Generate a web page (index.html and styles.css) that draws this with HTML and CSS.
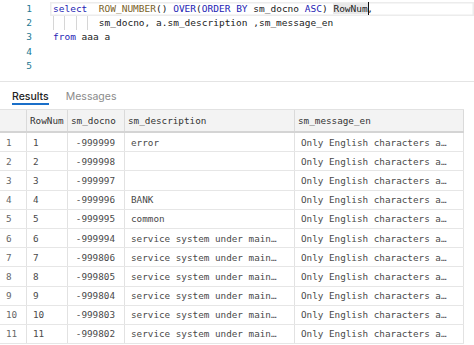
FILE: index.html
```html
<!DOCTYPE html>
<html>
<head>
<meta charset="utf-8">
<link rel="stylesheet" href="styles.css">
</head>
<body>
<div class="editor">
  <div class="gutter">
    <div class="ln">1</div>
    <div class="ln">2</div>
    <div class="ln">3</div>
    <div class="ln">4</div>
    <div class="ln">5</div>
  </div>
  <div class="code">
    <div class="line current"><span class="kw">select</span>  <span class="fn">ROW_NUMBER</span>() <span class="kw">OVER</span>(<span class="kw">ORDER</span> <span class="kw">BY</span> sm_docno <span class="kw">ASC</span>) <span class="hl">RowNum</span><span class="cursor"></span>,</div>
    <div class="line"><span class="ind">  </span><span class="ind">  </span><span class="ind">  </span><span class="ind">  </span>sm_docno, a.sm_description ,sm_message_en</div>
    <div class="line"><span class="kw">from</span> aaa a</div>
    <div class="line"> </div>
    <div class="line"> </div>
  </div>
</div>
<div class="tabs">
  <div class="tab active">Results</div>
  <div class="tab">Messages</div>
</div>
<div class="grid">
  <div class="row head">
    <div class="c c0"></div><div class="c c1">RowNum</div><div class="c c2">sm_docno</div><div class="c c3">sm_description</div><div class="c c4">sm_message_en</div>
  </div>
  <div class="row"><div class="c c0">1</div><div class="c c1">1</div><div class="c c2 num">-999999</div><div class="c c3">error</div><div class="c c4">Only English characters a…</div></div>
  <div class="row"><div class="c c0">2</div><div class="c c1">2</div><div class="c c2 num">-999998</div><div class="c c3"></div><div class="c c4">Only English characters a…</div></div>
  <div class="row"><div class="c c0">3</div><div class="c c1">3</div><div class="c c2 num">-999997</div><div class="c c3"></div><div class="c c4">Only English characters a…</div></div>
  <div class="row"><div class="c c0">4</div><div class="c c1">4</div><div class="c c2 num">-999996</div><div class="c c3">BANK</div><div class="c c4">Only English characters a…</div></div>
  <div class="row"><div class="c c0">5</div><div class="c c1">5</div><div class="c c2 num">-999995</div><div class="c c3">common</div><div class="c c4">Only English characters a…</div></div>
  <div class="row"><div class="c c0">6</div><div class="c c1">6</div><div class="c c2 num">-999994</div><div class="c c3">service system under main…</div><div class="c c4">Only English characters a…</div></div>
  <div class="row"><div class="c c0">7</div><div class="c c1">7</div><div class="c c2 num">-999806</div><div class="c c3">service system under main…</div><div class="c c4">Only English characters a…</div></div>
  <div class="row"><div class="c c0">8</div><div class="c c1">8</div><div class="c c2 num">-999805</div><div class="c c3">service system under main…</div><div class="c c4">Only English characters a…</div></div>
  <div class="row"><div class="c c0">9</div><div class="c c1">9</div><div class="c c2 num">-999804</div><div class="c c3">service system under main…</div><div class="c c4">Only English characters a…</div></div>
  <div class="row"><div class="c c0">10</div><div class="c c1">10</div><div class="c c2 num">-999803</div><div class="c c3">service system under main…</div><div class="c c4">Only English characters a…</div></div>
  <div class="row"><div class="c c0">11</div><div class="c c1">11</div><div class="c c2 num">-999802</div><div class="c c3">service system under main…</div><div class="c c4">Only English characters a…</div></div>
</div>
</body>
</html>
```
FILE: styles.css
```css
html, body {
  margin: 0;
  padding: 0;
  background: #ffffff;
  overflow: hidden;
}
body {
  width: 474px;
  height: 345px;
}
.editor {
  display: flex;
  height: 82px;
  box-sizing: border-box;
  padding-top: 2px;
  border-bottom: 1px solid #e4e4e4;
  font-family: "DejaVu Sans Mono", monospace;
  font-size: 9.5px;
}
.gutter {
  width: 32px;
  text-align: right;
  color: #237893;
}
.ln {
  height: 14.2px;
  line-height: 14.2px;
}
.code {
  flex: 1;
  margin-left: 18px;
  color: #222;
}
.line {
  height: 14.2px;
  line-height: 14.2px;
  white-space: pre;
  padding-left: 3px;
}
.line.current {
  box-shadow: inset 0 0 0 1.5px #ececec;
}
.kw { color: #2424b4; }
.fn { color: #7a6228; }
.hl { background: #e9e9e9; }
.cursor {
  display: inline-block;
  width: 0;
  height: 13px;
  vertical-align: -3px;
  border-left: 1.5px solid #111;
  margin-right: -1.5px;
}
.ind {
  display: inline-block;
  height: 14.2px;
  vertical-align: top;
  box-shadow: inset 1px 0 0 #d6d6d6;
}
.tabs {
  display: flex;
  height: 27px;
  padding-left: 12px;
  gap: 17px;
  font-family: "Inter", "Open Sans", sans-serif;
  font-size: 10.5px;
  align-items: flex-start;
}
.tab {
  padding-top: 8px;
  height: 16px;
  line-height: 13px;
  color: #8a8a8a;
}
.tab.active {
  color: #222;
  font-weight: 500;
  border-bottom: 2px solid #1a6fc9;
  height: 13px;
}
.grid {
  font-family: "DejaVu Sans Mono", monospace;
  font-size: 9.3px;
  color: #4a4a4a;
}
.row {
  display: flex;
  height: 19.2px;
  box-sizing: border-box;
  border-bottom: 1px solid #e6e6e6;
  width: 464px;
}
.row.head {
  height: 24px;
  background: #f3f3f3;
  border-top: 1px solid #e2e2e2;
  border-bottom: 2px solid #d4d4d4;
  color: #333;
}
.c {
  box-sizing: border-box;
  border-right: 1px solid #e2e2e2;
  display: flex;
  align-items: center;
  padding-left: 6px;
  white-space: pre;
  overflow: hidden;
}
.head .c {
  padding-left: 3px;
  border-right-color: #dadada;
}
.c0 { width: 27px; padding-left: 6px; color: #666; }
.c1 { width: 41px; }
.c2 { width: 57px; }
.c3 { width: 170px; }
.c4 { width: 169px; }
.c.num {
  justify-content: flex-end;
  padding-right: 9px;
}
.head .c2 { justify-content: flex-start; }
```
